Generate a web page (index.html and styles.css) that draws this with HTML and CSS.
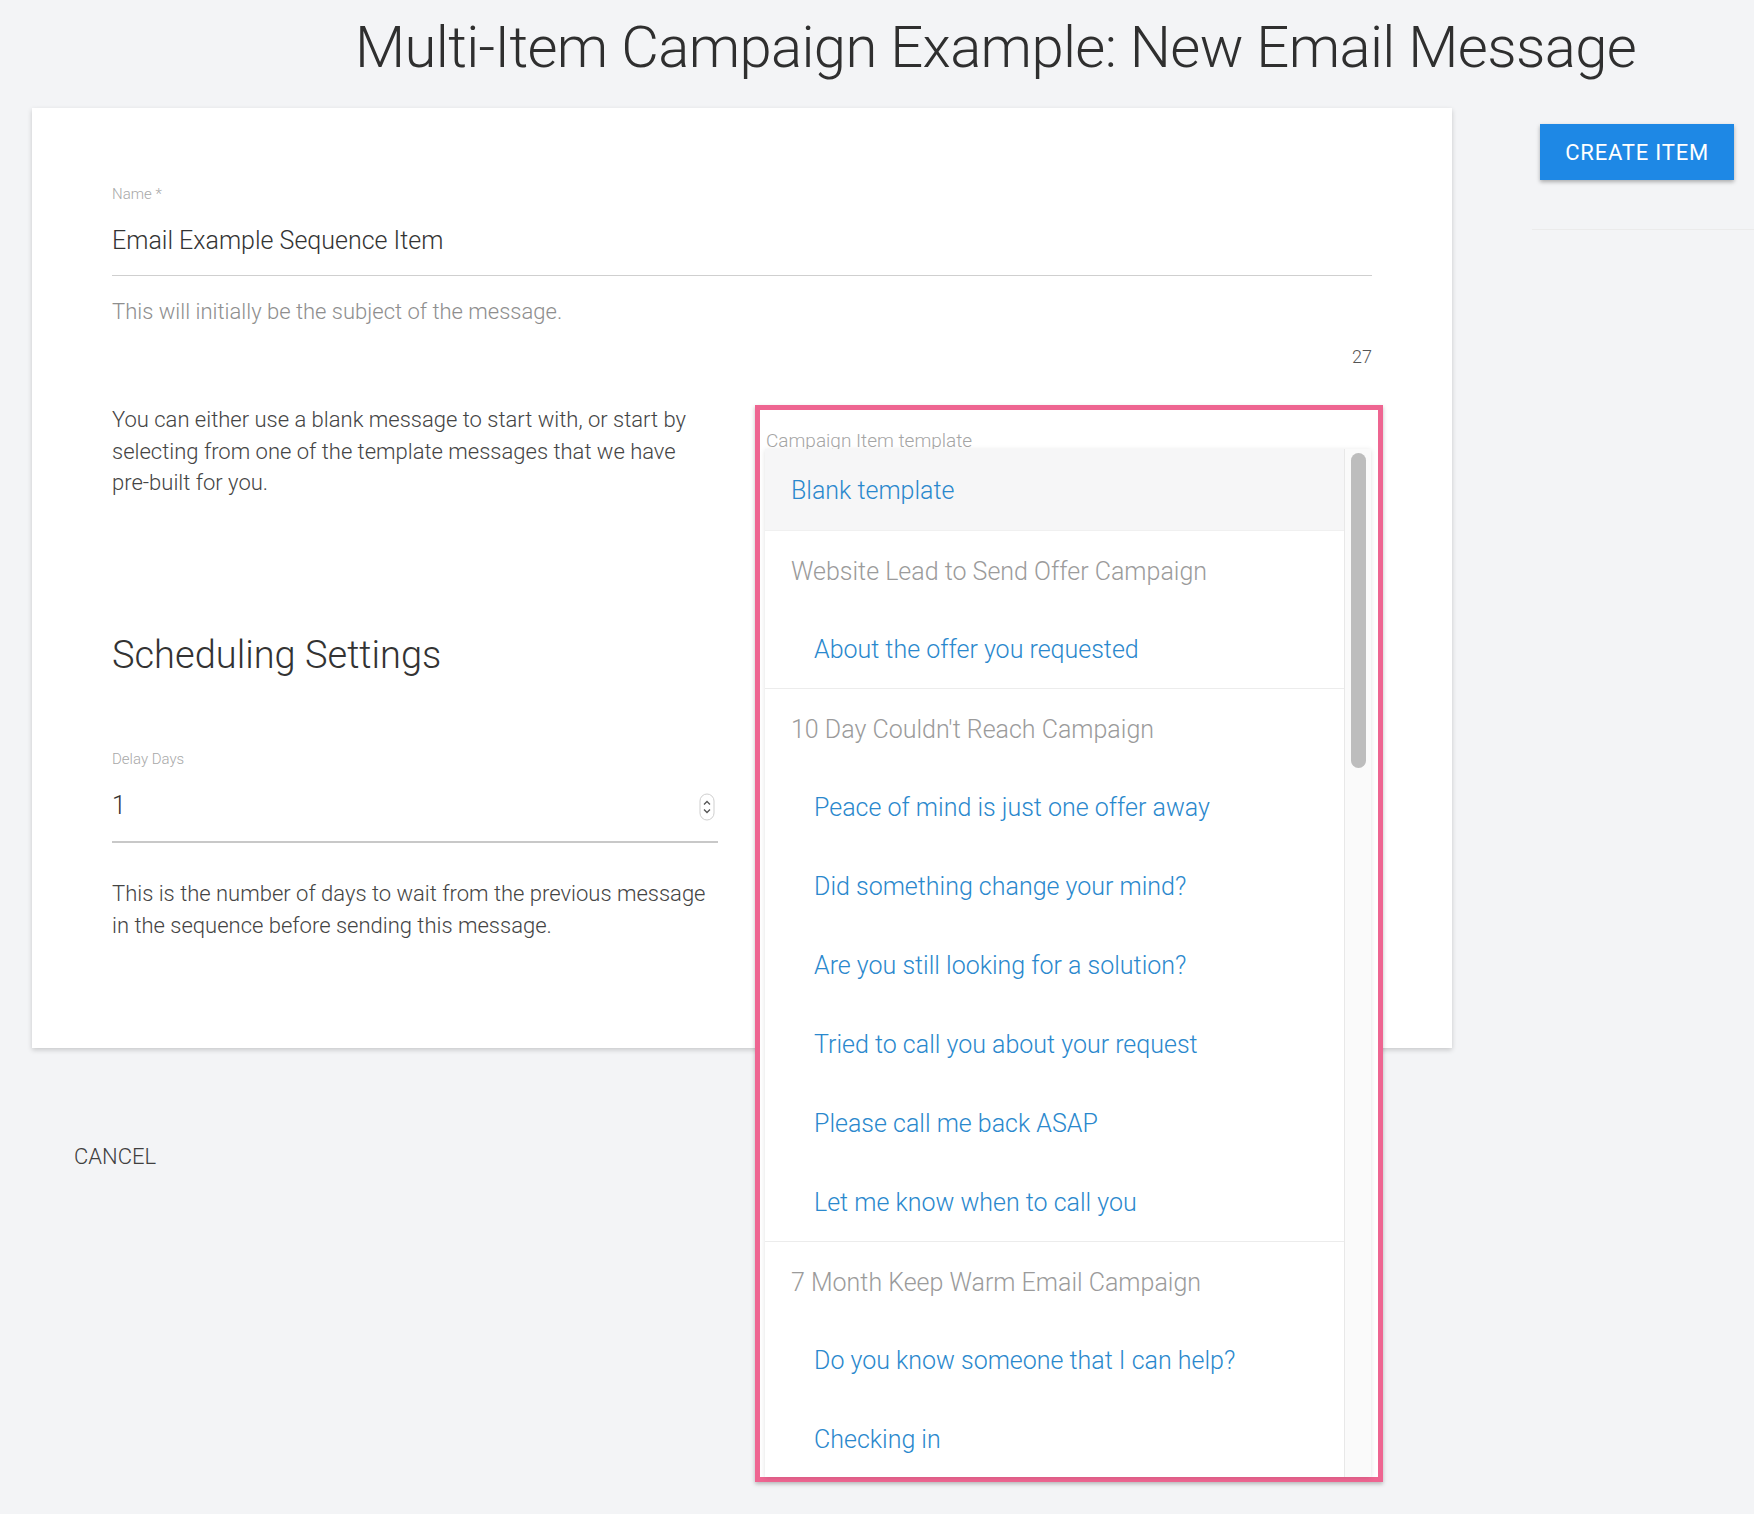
FILE: index.html
```html
<!DOCTYPE html>
<html lang="en">
<head>
    <meta charset="UTF-8">
    <meta name="viewport" content="width=device-width, initial-scale=1.0">
    <title>New Email Message</title>
    <link rel="stylesheet" href="styles.css">
</head>
<body>
    <h1 class="page-title">Multi-Item Campaign Example: New Email Message</h1>

    <div class="main">
        <div class="card">

            <!-- Name field -->
            <div class="field">
                <label class="field-label" for="itemName">Name *</label>
                <input class="field-input" id="itemName" type="text" value="Email Example Sequence Item">
                <p class="field-help">This will initially be the subject of the message.</p>
                <div class="field-count">27</div>
            </div>

            <div class="columns">
                <div class="col-left">
                    <p class="intro">You can either use a blank message to start with, or start by selecting from one of the template messages that we have pre-built for you.</p>

                    <h2 class="section-title">Scheduling Settings</h2>

                    <div class="field">
                        <label class="field-label" for="delayDays">Delay Days</label>
                        <div class="number-wrap">
                            <input class="field-input thick" id="delayDays" type="text" value="1">
                            <svg class="stepper" width="16" height="28" viewBox="0 0 16 28">
                                <rect x="1" y="1" width="14" height="26" rx="7" fill="#fff" stroke="#cfcfcf"/>
                                <path d="M5 11.5 L8 8.5 L11 11.5" fill="none" stroke="#555" stroke-width="1.3"/>
                                <path d="M5 16.5 L8 19.5 L11 16.5" fill="none" stroke="#555" stroke-width="1.3"/>
                            </svg>
                        </div>
                        <p class="delay-help">This is the number of days to wait from the previous message in the sequence before sending this message.</p>
                    </div>
                </div>

                <div class="col-right">
                    <!-- open template dropdown -->
                    <div class="template-select">
                        <div class="select-label">Campaign Item template</div>
                        <div class="menu">
                            <ul class="menu-list">
                                <li class="menu-item selected">Blank template</li>
                                <li class="menu-group">Website Lead to Send Offer Campaign</li>
                                <li class="menu-item nested">About the offer you requested</li>
                                <li class="menu-group">10 Day Couldn't Reach Campaign</li>
                                <li class="menu-item nested">Peace of mind is just one offer away</li>
                                <li class="menu-item nested">Did something change your mind?</li>
                                <li class="menu-item nested">Are you still looking for a solution?</li>
                                <li class="menu-item nested">Tried to call you about your request</li>
                                <li class="menu-item nested">Please call me back ASAP</li>
                                <li class="menu-item nested">Let me know when to call you</li>
                                <li class="menu-group">7 Month Keep Warm Email Campaign</li>
                                <li class="menu-item nested">Do you know someone that I can help?</li>
                                <li class="menu-item nested">Checking in</li>
                            </ul>
                            <div class="scroll-track">
                                <div class="scroll-thumb"></div>
                            </div>
                        </div>
                    </div>
                </div>
            </div>
        </div>

        <div class="sidebar">
            <button class="btn-create">CREATE ITEM</button>
            <div class="sidebar-rule"></div>
        </div>
    </div>

    <div class="actions">
        <button class="btn-cancel">CANCEL</button>
    </div>
</body>
</html>
```

FILE: styles.css
```css
body, html {
    margin: 0;
    padding: 0;
}
body {
    min-height: 100vh;
    background: #f3f4f6;
    font-family: 'Roboto', 'Liberation Sans', sans-serif;
    font-weight: 300;
    color: #333;
}
.page-title {
    margin: 0;
    padding: 11px 0 0 355px;
    font-size: 58px;
    font-weight: 300;
    letter-spacing: -0.63px;
    line-height: 72px;
    white-space: nowrap;
    color: #2f2f2f;
}
.main {
    display: flex;
    align-items: flex-start;
    margin-top: 25px;
    padding-left: 32px;
}
.card {
    width: 1420px;
    box-sizing: border-box;
    padding: 77px 80px 106px 80px;
    background: #fff;
    box-shadow: 0 2px 5px rgba(0,0,0,0.18);
}
.field-label {
    display: block;
    font-size: 15px;
    line-height: 18px;
    color: #a8a8a8;
}
.field-input {
    display: block;
    width: 100%;
    box-sizing: border-box;
    margin-top: 20px;
    padding: 0 0 16px 0;
    border: none;
    border-bottom: 1px solid #cfcfcf;
    outline: none;
    background: transparent;
    font-family: inherit;
    font-weight: 300;
    font-size: 25px;
    line-height: 36px;
    color: #333;
}
.field-input.thick {
    padding-bottom: 17px;
    border-bottom: 2px solid #c8c8c8;
}
.field-help {
    margin: 22px 0 0 0;
    font-size: 22px;
    line-height: 28px;
    color: #8e8e8e;
}
.field-count {
    margin-top: 19px;
    text-align: right;
    font-size: 18px;
    line-height: 24px;
    color: #555;
}
.columns {
    display: grid;
    grid-template-columns: 606px 1fr;
    gap: 37px;
    margin-top: 33px;
}
.intro {
    margin: 0;
    padding-top: 2px;
    font-size: 22px;
    line-height: 31.5px;
    color: #444;
}
.section-title {
    margin: 134px 0 73px 0;
    font-size: 38px;
    font-weight: 300;
    line-height: 44px;
    color: #333;
}
.number-wrap {
    position: relative;
}
.stepper {
    position: absolute;
    right: 3px;
    top: 5px;
}
.delay-help {
    margin: 35px 0 0 0;
    font-size: 22px;
    line-height: 32px;
    color: #444;
}
.col-right {
    position: relative;
}
.template-select {
    position: absolute;
    top: 3px;
    left: 0;
    width: 628px;
    height: 1077px;
    box-sizing: border-box;
    display: flex;
    flex-direction: column;
    border: 5px solid #ee6591;
    background: #fff;
    box-shadow: 0 2px 4px rgba(0,0,0,0.25);
    z-index: 2;
}
.select-label {
    padding: 20px 6px 0 6px;
    margin-bottom: -3px;
    font-size: 19px;
    line-height: 22px;
    color: #a5a5a5;
}
.menu {
    position: relative;
    flex: 1;
    min-height: 0;
    display: flex;
    margin: 0 7px 0 5px;
    overflow: hidden;
    background: #fff;
    box-shadow: 0 1px 5px rgba(0,0,0,0.12);
}
.menu-list {
    flex: 1;
    list-style: none;
    margin: 0;
    padding: 0;
}
.menu-item, .menu-group {
    display: flex;
    align-items: center;
    height: 79px;
    box-sizing: border-box;
    padding: 2px 0 0 26px;
    font-size: 25px;
    white-space: nowrap;
}
.menu-item {
    color: #2a88cd;
}
.menu-item.nested {
    padding-left: 49px;
}
.menu-item.selected {
    background: #f6f6f7;
    height: 81px;
}
.menu-group {
    color: #9b9b9b;
    border-top: 1px solid #ececec;
}
.menu-item.selected + .menu-group {
    border-top-color: #f0f0f0;
}
.scroll-track {
    width: 26px;
    border-left: 1px solid #e8e8e8;
    background: #fafafa;
}
.scroll-thumb {
    width: 15px;
    height: 315px;
    margin: 4px 0 0 6px;
    border-radius: 8px;
    background: #bdbdbd;
}
.sidebar {
    flex: 1;
    display: flex;
    flex-direction: column;
    align-items: flex-end;
    padding-top: 16px;
}
.btn-create {
    margin-right: 20px;
    height: 56px;
    padding: 0 25px;
    border: none;
    background: #1e88e5;
    color: #fff;
    font-family: 'Roboto', 'Liberation Sans', sans-serif;
    font-weight: 400;
    font-size: 22px;
    letter-spacing: 0.8px;
    box-shadow: 0 2px 4px rgba(0,0,0,0.3);
    cursor: pointer;
}
.sidebar-rule {
    align-self: stretch;
    margin: 49px 0 0 80px;
    height: 1px;
    background: #ebebeb;
}
.actions {
    padding: 96px 0 0 58px;
}
.btn-cancel {
    padding: 0 16px;
    border: none;
    background: transparent;
    font-family: 'Roboto', 'Liberation Sans', sans-serif;
    font-weight: 300;
    font-size: 22px;
    line-height: 26px;
    color: #404040;
    cursor: pointer;
}
```
